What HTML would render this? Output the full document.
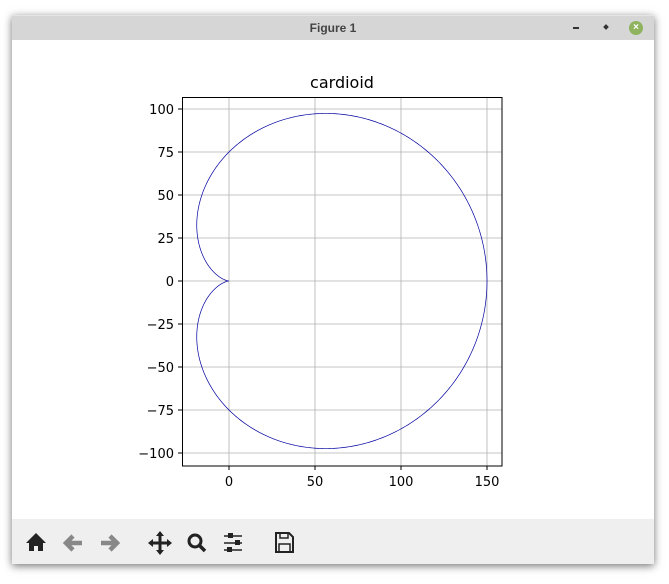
<!DOCTYPE html>
<html><head><meta charset="utf-8"><style>
html,body{margin:0;padding:0;background:#fff;width:669px;height:584px;overflow:hidden;font-family:"DejaVu Sans","Liberation Sans",sans-serif}
#win{position:absolute;left:12px;top:15px;width:642px;height:549px;background:#fff;box-shadow:0 2px 8px rgba(0,0,0,.55)}
#tb{position:absolute;left:0;top:0;width:642px;height:24px;background:#d6d6d6;border-top:1px solid #e4e4e4}
#tb .t{position:absolute;left:0;width:100%;text-align:center;top:5px;font:bold 12px "Liberation Sans",sans-serif;color:#444}
#tool{position:absolute;left:0;top:504px;width:642px;height:45px;background:#efefef}
</style></head><body>
<div id="win">
 <div id="tb"><div class="t">Figure 1</div>
  <div style="position:absolute;left:561px;top:11px;width:6px;height:2px;background:#333"></div>
  <div style="position:absolute;left:592px;top:9px;width:4px;height:4px;background:#333;transform:rotate(45deg)"></div>
  <div style="position:absolute;left:617px;top:5px;width:14px;height:14px;border-radius:50%;background:#8fb35e;color:#fff;font:bold 10px sans-serif;text-align:center;line-height:14px">×</div>
 </div>
 <div id="tool">
  <svg width="300" height="45" viewBox="0 4 300 45">
   <path d="M14 28 L24 18 L34 28 L31 28 L31 36 L26 36 L26 31 L22 31 L22 36 L17 36 L17 28 Z" fill="#222"/>
   <path d="M70 28 L54 28 M61 21 L54 28 L61 35" stroke="#888" stroke-width="4.5" fill="none"/>
   <path d="M89 28 L105 28 M98 21 L105 28 L98 35" stroke="#888" stroke-width="4.5" fill="none"/>
   <path d="M148 19 L148 37 M139 28 L157 28" stroke="#222" stroke-width="3"/>
   <path d="M144 21 L148 16 L152 21Z M144 35 L148 40 L152 35Z M141 24 L136 28 L141 32Z M155 24 L160 28 L155 32Z" fill="#222"/>
   <circle cx="183" cy="26" r="6" stroke="#222" stroke-width="3" fill="none"/>
   <path d="M187 30 L193 36" stroke="#222" stroke-width="3.5"/>
   <path d="M212 21 H230 M212 28 H230 M212 35 H230" stroke="#222" stroke-width="1.5"/>
   <rect x="216" y="18" width="5" height="5" fill="#222"/><rect x="223" y="25" width="5" height="5" fill="#222"/><rect x="215" y="32" width="5" height="5" fill="#222"/>
   <path d="M264 18 H277 L281 22 V37 H264 Z" stroke="#222" stroke-width="2" fill="none"/>
   <rect x="268" y="18" width="8" height="5" stroke="#222" stroke-width="1.5" fill="none"/>
   <rect x="267" y="29" width="11" height="8" stroke="#222" stroke-width="1.5" fill="none"/>
  </svg>
 </div>
</div>
<svg id="plot" style="position:absolute;left:0;top:0" width="669" height="584">
 <g stroke="#b0b0b0" stroke-width="0.8" id="grid"></g>
 <path id="card" fill="none" stroke="#0000a0" stroke-width="0.7"/>
 <rect x="182.5" y="97.5" width="319.5" height="368.5" fill="none" stroke="#000" stroke-width="1"/>
 <g id="ticks" stroke="#000" stroke-width="1"></g>
 <g id="labels" font-family="DejaVu Sans, Liberation Sans, sans-serif" font-size="13" fill="#000"></g>
 <text x="342" y="88" text-anchor="middle" font-family="DejaVu Sans, Liberation Sans, sans-serif" font-size="16">cardioid</text>
</svg>
<script>
var s=1.72,X=function(v){return 229+v*s},Y=function(v){return 281-v*s};
var g=document.getElementById('grid'),t=document.getElementById('ticks'),l=document.getElementById('labels'),ns='http://www.w3.org/2000/svg';
function el(p,n,a,txt){var e=document.createElementNS(ns,n);for(var k in a)e.setAttribute(k,a[k]);if(txt!=null)e.textContent=txt;p.appendChild(e);}
[0,50,100,150].forEach(function(v){var x=X(v);el(g,'line',{x1:x,x2:x,y1:97,y2:466});el(t,'line',{x1:x,x2:x,y1:466,y2:470});el(l,'text',{x:x,y:486,'text-anchor':'middle'},v<0?'−'+(-v):''+v);});
[-100,-75,-50,-25,0,25,50,75,100].forEach(function(v){var y=Y(v);el(g,'line',{x1:182,x2:502,y1:y,y2:y});el(t,'line',{x1:178,x2:182,y1:y,y2:y});el(l,'text',{x:174,y:y+5,'text-anchor':'end'},v<0?'−'+(-v):''+v);});
var d='';for(var i=0;i<=720;i++){var a=i/720*2*Math.PI,r=75*(1+Math.cos(a));d+=(i?'L':'M')+X(r*Math.cos(a)).toFixed(2)+' '+Y(r*Math.sin(a)).toFixed(2);}
document.getElementById('card').setAttribute('d',d);
</script>
</body></html>
